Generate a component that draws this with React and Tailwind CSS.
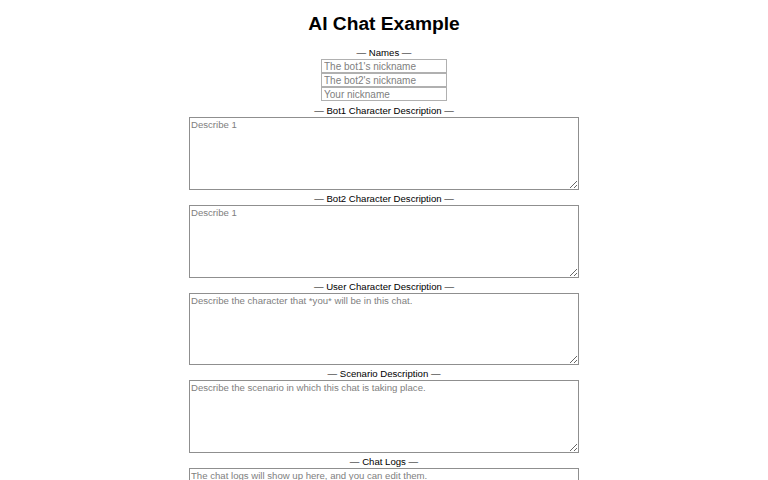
import React from 'react';

const sections = [
    { label: 'Bot1 Character Description', placeholder: 'Describe 1' },
    { label: 'Bot2 Character Description', placeholder: 'Describe 1' },
    { label: 'User Character Description', placeholder: 'Describe the character that *you* will be in this chat.' },
    { label: 'Scenario Description', placeholder: 'Describe the scenario in which this chat is taking place.' },
    { label: 'Chat Logs', placeholder: 'The chat logs will show up here, and you can edit them.' },
];

function Label({ children, className = '' }) {
    return (
        <div className={`h-[15px] text-[9.6px] leading-[17px] text-black text-center ${className}`}>
            — {children} —
        </div>
    );
}

export default function App() {
    return (
        <div className="flex min-h-screen flex-col items-center bg-white font-['Liberation_Sans',Arial,sans-serif]">
            <h1 className="h-[44px] pt-[12px] text-[19.2px] font-bold leading-[23px] text-black">AI Chat Example</h1>

            {/* Names */}
            <Label>Names</Label>
            <div className="flex flex-col">
                {["The bot1's nickname", "The bot2's nickname", 'Your nickname'].map((p) => (
                    <input
                        key={p}
                        placeholder={p}
                        className="h-[14px] w-[126px] border border-[#b0b0b0] px-[2px] text-[10px] leading-[12px] text-black placeholder:text-[#808080] outline-none"
                    />
                ))}
            </div>

            {sections.map((s, i) => (
                <div key={s.label} className="flex flex-col items-center">
                    <Label className={i === 0 ? 'mt-[1px]' : ''}>{s.label}</Label>
                    <textarea
                        placeholder={s.placeholder}
                        className="h-[72.75px] w-[390px] border border-[#8f8f8f] px-[1px] py-[1px] text-[9.6px] leading-[12px] text-black placeholder:text-[#808080] outline-none"
                    />
                </div>
            ))}
        </div>
    );
}
